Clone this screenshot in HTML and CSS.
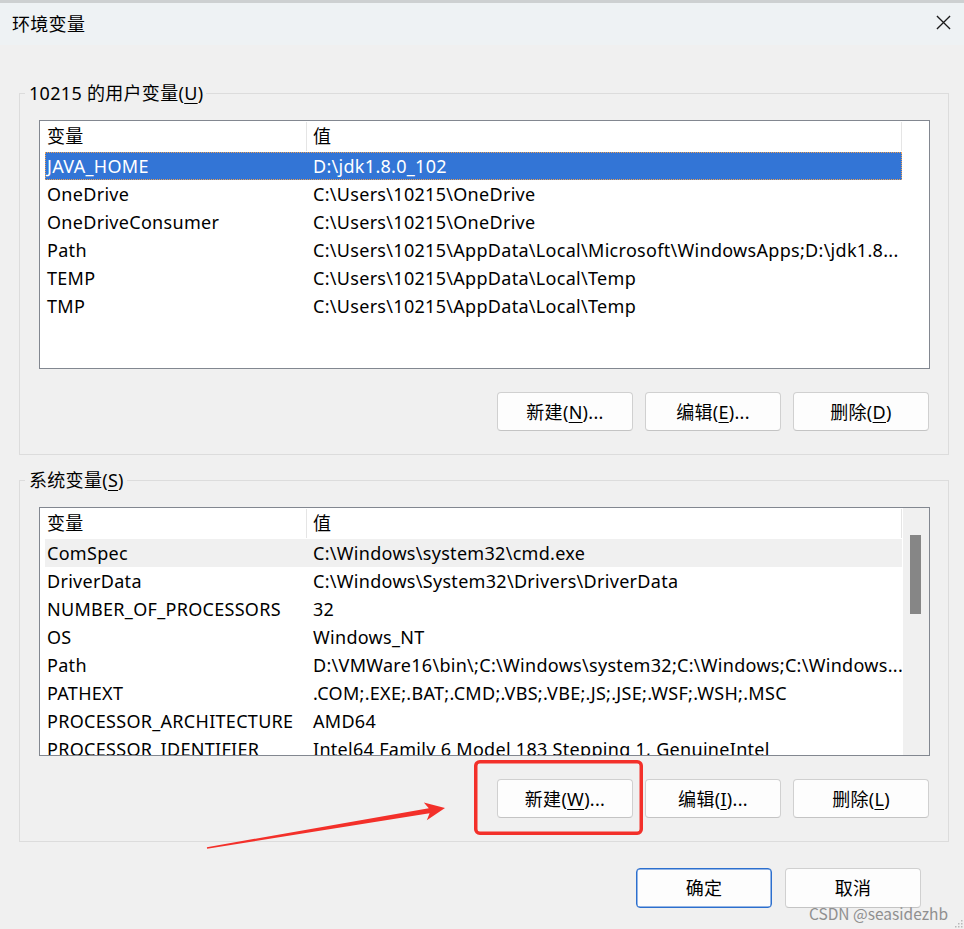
FILE: index.html
```html
<!DOCTYPE html>
<html lang="zh-CN">
<head>
<meta charset="utf-8">
<title>环境变量</title>
<link rel="stylesheet" href="styles.css">
</head>
<body>
<div class="window">
  <div class="topstrip"></div>
  <header class="titlebar">
    <span class="title">环境变量</span>
    <span class="close" aria-label="关闭">
      <svg viewBox="0 0 16 16" width="16" height="16"><path d="M1 1 L15 15 M15 1 L1 15" stroke="#1b1b1b" stroke-width="1.4" fill="none"/></svg>
    </span>
  </header>
  <main class="content">
    <fieldset class="group">
      <legend>10215 的用户变量(<u>U</u>)</legend>
      <div class="list">
        <div class="list-main">
          <div class="list-head"><div class="hcell c1">变量</div><div class="hcell c2">值</div></div>
          <div class="row selected"><span class="cell">JAVA_HOME</span><span class="cell">D:\jdk1.8.0_102</span></div>
          <div class="row"><span class="cell">OneDrive</span><span class="cell">C:\Users\10215\OneDrive</span></div>
          <div class="row"><span class="cell">OneDriveConsumer</span><span class="cell">C:\Users\10215\OneDrive</span></div>
          <div class="row"><span class="cell">Path</span><span class="cell">C:\Users\10215\AppData\Local\Microsoft\WindowsApps;D:\jdk1.8...</span></div>
          <div class="row"><span class="cell">TEMP</span><span class="cell">C:\Users\10215\AppData\Local\Temp</span></div>
          <div class="row"><span class="cell">TMP</span><span class="cell">C:\Users\10215\AppData\Local\Temp</span></div>
        </div>
        <div class="list-side"></div>
      </div>
      <div class="buttons">
        <button class="btn">新建(<u>N</u>)...</button>
        <button class="btn">编辑(<u>E</u>)...</button>
        <button class="btn">删除(<u>D</u>)</button>
      </div>
    </fieldset>

    <fieldset class="group group-system">
      <legend>系统变量(<u>S</u>)</legend>
      <div class="list">
        <div class="list-main">
          <div class="list-head"><div class="hcell c1">变量</div><div class="hcell c2">值</div></div>
          <div class="row inactive"><span class="cell">ComSpec</span><span class="cell">C:\Windows\system32\cmd.exe</span></div>
          <div class="row"><span class="cell">DriverData</span><span class="cell">C:\Windows\System32\Drivers\DriverData</span></div>
          <div class="row"><span class="cell">NUMBER_OF_PROCESSORS</span><span class="cell">32</span></div>
          <div class="row"><span class="cell">OS</span><span class="cell">Windows_NT</span></div>
          <div class="row"><span class="cell">Path</span><span class="cell">D:\VMWare16\bin\;C:\Windows\system32;C:\Windows;C:\Windows...</span></div>
          <div class="row"><span class="cell">PATHEXT</span><span class="cell">.COM;.EXE;.BAT;.CMD;.VBS;.VBE;.JS;.JSE;.WSF;.WSH;.MSC</span></div>
          <div class="row"><span class="cell">PROCESSOR_ARCHITECTURE</span><span class="cell">AMD64</span></div>
          <div class="row"><span class="cell">PROCESSOR_IDENTIFIER</span><span class="cell">Intel64 Family 6 Model 183 Stepping 1, GenuineIntel</span></div>
        </div>
        <div class="list-side scrollbar"><div class="thumb"></div></div>
      </div>
      <div class="buttons">
        <button class="btn">新建(<u>W</u>)...</button>
        <button class="btn">编辑(<u>I</u>)...</button>
        <button class="btn">删除(<u>L</u>)</button>
      </div>
    </fieldset>

    <div class="dialog-buttons">
      <button class="btn primary">确定</button>
      <button class="btn">取消</button>
    </div>
  </main>
</div>

<div class="watermark">CSDN @seasidezhb</div>

<svg class="grip" viewBox="0 0 8 8" width="8" height="8">
  <rect x="6" y="0" width="1.5" height="1.5" fill="#b8b8b8"/>
  <rect x="3" y="3" width="1.5" height="1.5" fill="#b8b8b8"/>
  <rect x="6" y="3" width="1.5" height="1.5" fill="#b8b8b8"/>
  <rect x="0" y="6" width="1.5" height="1.5" fill="#b8b8b8"/>
  <rect x="3" y="6" width="1.5" height="1.5" fill="#b8b8b8"/>
  <rect x="6" y="6" width="1.5" height="1.5" fill="#b8b8b8"/>
</svg>

<svg class="annotation" viewBox="0 0 964 929" width="964" height="929">
  <rect x="475.75" y="761.75" width="165.5" height="71.5" rx="4" ry="4" fill="none" stroke="#f3302a" stroke-width="3.5"/>
  <polygon fill="#f3302a" points="206.9,847.2 428.8,808.2 423.8,802.4 445,808 426.8,820.2 429.6,813.2 207.1,848.8"/>
</svg>
</body>
</html>
```
FILE: styles.css
```css
* { box-sizing: border-box; }

html, body {
  margin: 0;
  padding: 0;
}

body {
  width: 964px;
  height: 929px;
  overflow: hidden;
  position: relative;
  background: #f0f0f0;
  font-family: "Noto Sans", "Noto Sans CJK SC", sans-serif;
  font-size: 18px;
  letter-spacing: 0.3px;
  color: #000;
}

.topstrip {
  height: 3px;
  background: #cdd0d1;
}

.titlebar {
  height: 42px;
  background: #eef2f4;
  display: flex;
  align-items: center;
  justify-content: space-between;
  padding: 0 13px 0 12px;
}

.title {
  line-height: 24px;
}

.close {
  align-self: flex-start;
  margin-top: 12px;
}

.close svg {
  display: block;
  width: 15px;
  height: 15px;
}

.content {
  padding: 36px 15px 0 19px;
}

.group {
  margin: 0;
  min-width: 0;
  border: 1px solid #dcdcdc;
  padding: 15px 18px 23px 19px;
}

.group-system {
  margin-top: 13px;
}

.group legend {
  line-height: 24px;
  padding: 0 3px 0 4px;
  margin-left: -14px;
}

u {
  text-underline-offset: 3px;
  text-decoration-thickness: 1px;
}

.list {
  height: 249px;
  border: 1px solid #828790;
  background: #fff;
  display: flex;
  overflow: hidden;
}

.list-main {
  width: 863px;
  flex: none;
}

.list-side {
  width: 26px;
  flex: none;
}

.scrollbar {
  background: #f0f0f0;
  padding: 27px 0 0 7px;
}

.thumb {
  width: 11px;
  height: 79px;
  background: #868686;
}

.list-head {
  display: grid;
  grid-template-columns: 267px 595px;
  height: 31px;
  padding-top: 1px;
}

.hcell {
  height: 29px;
  line-height: 29px;
  border-right: 1px solid #e5e5e5;
}

.hcell.c1 { padding-left: 7px; }
.hcell.c2 { padding-left: 6px; }

.row {
  margin-left: 5px;
  width: 857px;
  height: 28px;
  display: grid;
  grid-template-columns: 266px 591px;
}

.cell {
  padding: 0 4px 0 2px;
  line-height: 28px;
  white-space: nowrap;
  overflow: hidden;
}

.row.selected {
  background: #3375d6;
  color: #fff;
  outline: 1px dotted #f0a050;
  outline-offset: -1px;
}

.row.inactive {
  background: #f0f0f0;
}

.buttons {
  display: flex;
  justify-content: flex-end;
  gap: 12px;
  margin-top: 23px;
  padding-right: 1px;
}

.btn {
  width: 136px;
  height: 39px;
  padding: 0;
  border: 1px solid #d0d0d0;
  border-bottom-color: #c4c4c4;
  border-radius: 4px;
  background: #fdfdfd;
  font-family: inherit;
  font-size: 18px;
  letter-spacing: 0.3px;
  color: #000;
  line-height: 24px;
}

.dialog-buttons {
  display: flex;
  justify-content: flex-end;
  gap: 13px;
  margin-top: 26px;
  padding-right: 28px;
}

.dialog-buttons .btn {
  height: 40px;
}

.btn.primary {
  border: 1px solid #2c6fce;
  box-shadow: inset 0 0 0 0.5px #2c6fce;
}

.watermark {
  position: absolute;
  left: 809px;
  top: 903px;
  font-family: "Noto Sans CJK SC", sans-serif;
  font-size: 15.5px;
  letter-spacing: 0;
  line-height: 20px;
  color: #8f8f8f;
  white-space: nowrap;
}

.grip {
  position: absolute;
  right: 1px;
  bottom: 1px;
}

.annotation {
  position: absolute;
  left: 0;
  top: 0;
  pointer-events: none;
}
```
